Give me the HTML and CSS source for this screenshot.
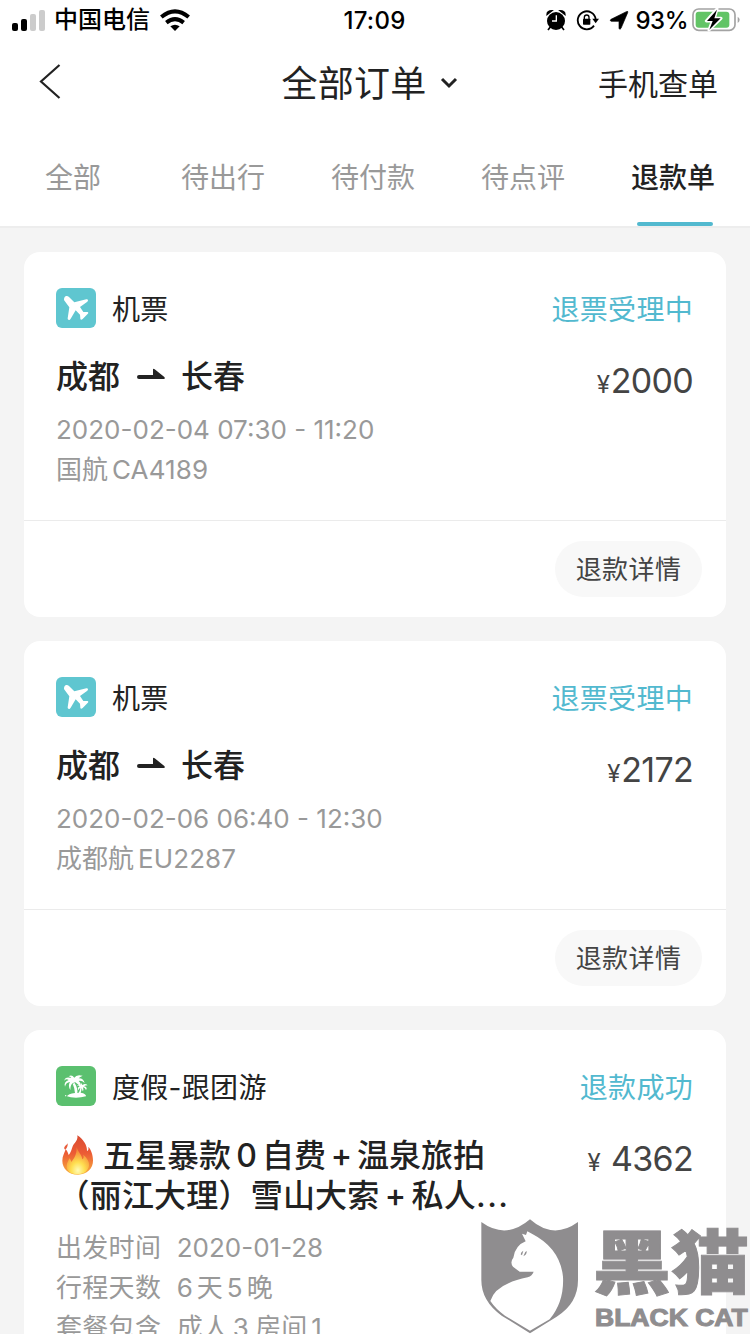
FILE: index.html
```html
<!DOCTYPE html>
<html lang="zh-CN">
<head>
<meta charset="utf-8">
<title>全部订单</title>
<link rel="stylesheet" href="styles.css">
</head>
<body>
<svg class="defs" width="0" height="0">
  <symbol id="plane" viewBox="0 0 120 120">
    <path fill="#fff" d="M25 29C27 23 35 23 39 27L55 43L91 34C96 33 98 38 94 41L72 57L82 72L94 72C98 73 98 76 94 79L80 93C76 97 72 95 73 91L72 80L59 67L44 92C41 98 35 97 35 91L40 58L26 39C23 35 24 32 25 29Z"/>
  </symbol>
  <symbol id="route-arrow" viewBox="0 0 84 34">
    <path fill="#222" d="M6 20H48V4Q48-1 53 3L82 26Q86 32 80 32H6Q0 32 0 26T6 20Z"/>
  </symbol>
</svg>
<div class="screen">
  <header class="status">
    <div class="status-left">
      <svg width="33" height="21" viewBox="0 0 33 21"><rect y="13" width="6" height="8" rx="2"/><rect x="9" y="9" width="6" height="12" rx="2"/><rect x="18" y="4" width="6" height="17" rx="2" fill="#ccc"/><rect x="27" width="6" height="21" rx="2" fill="#ccc"/></svg>
      <span class="carrier">中国电信</span>
      <svg width="30" height="22" viewBox="0 0 90 66"><g fill="none" stroke="#000" stroke-width="12"><path d="M4 24Q45-10 86 24"/><path d="M19 41Q45 20 71 41"/></g><path d="M45 66L31 52Q45 42 59 52Z"/></svg>
    </div>
    <div class="time">17:09</div>
    <div class="status-right">
      <svg width="20" height="22" viewBox="0 0 60 66"><circle cx="30" cy="36" r="27"/><path d="M3 17Q3 5 18 5ZM57 17Q57 5 42 5Z" stroke="#000" stroke-width="4"/><path d="M13 54L6 63M47 54L54 63" stroke="#000" stroke-width="5"/><path d="M31 19V36H18" fill="none" stroke="#fff" stroke-width="4"/></svg>
      <svg class="lock" width="23" height="22" viewBox="0 0 69 66"><path d="M54 50A27 27 0 1 1 59 30" fill="none" stroke="#000" stroke-width="5.500"/><path d="M49 29H69L59 43Z"/><rect x="21" y="29" width="22" height="18" rx="2"/><path d="M25 31V25Q25 18 32 18T39 25V31" fill="none" stroke="#000" stroke-width="4"/></svg>
      <svg class="loc" width="20" height="19" viewBox="0 0 60 57"><path d="M52 2Q58-1 56 5L36 52Q32 58 30 52V31H7Q1 29 6 25Z" stroke="#000" stroke-width="2"/></svg>
      <span class="percent">93%</span>
      <svg width="48" height="24" viewBox="0 0 144 72"><rect x="3" y="3" width="126" height="64" rx="17" fill="#fff" stroke="#a3a3a3" stroke-width="5"/><rect x="11" y="11" width="101" height="48" rx="9" fill="#62c466"/><path d="M137 26Q143 30 143 35T137 45Z" fill="#a3a3a3"/><path d="M75 3L43 39H61L51 66L87 31H67Z" stroke="#fff" stroke-width="9" stroke-linejoin="round"/><path d="M75 5L45 39H62L52 65L86 31H67Z"/></svg>
    </div>
  </header>
  <nav class="nav">
    <svg class="back" width="24" height="38" viewBox="0 0 24 38"><path d="M21.500 3L3 19.500L21.500 36" fill="none" stroke="#222" stroke-width="2.200"/></svg>
    <h1 class="nav-title">全部订单<svg width="18" height="12" viewBox="0 0 18 12"><path d="M2 2L9 9L16 2" fill="none" stroke="#222" stroke-width="3"/></svg></h1>
    <span class="nav-action">手机查单</span>
  </nav>
  <div class="tabs">
    <span class="tab">全部</span><span class="tab">待出行</span><span class="tab">待付款</span><span class="tab">待点评</span><span class="tab active">退款单</span>
  </div>
  <main class="list">
    <article class="card">
      <div class="card-body">
        <div class="card-head"><span class="badge flight"><svg width="40" height="40"><use href="#plane"/></svg></span><span class="kind">机票</span><span class="state">退票受理中</span></div>
        <div class="summary"><h2 class="route">成都<svg width="28" height="12"><use href="#route-arrow"/></svg>长春</h2><div class="price"><span class="yen">¥</span>2000</div></div>
        <p class="line">2020-02-04 07:30 - 11:20</p>
        <p class="line">国航<span class="code">CA4189</span></p>
      </div>
      <div class="card-foot"><span class="button">退款详情</span></div>
    </article>
    <article class="card">
      <div class="card-body">
        <div class="card-head"><span class="badge flight"><svg width="40" height="40"><use href="#plane"/></svg></span><span class="kind">机票</span><span class="state">退票受理中</span></div>
        <div class="summary"><h2 class="route">成都<svg width="28" height="12"><use href="#route-arrow"/></svg>长春</h2><div class="price"><span class="yen">¥</span>2172</div></div>
        <p class="line">2020-02-06 06:40 - 12:30</p>
        <p class="line">成都航<span class="code">EU2287</span></p>
      </div>
      <div class="card-foot"><span class="button">退款详情</span></div>
    </article>
    <article class="card">
      <div class="card-body">
        <div class="card-head"><span class="badge holiday"><svg width="40" height="40" viewBox="0 0 120 120"><g fill="#fff"><path d="M33 91Q36 84 57 81Q56 66 50 53L56 51Q66 68 64 81L68 80Q72 74 73 65L77 66Q76 75 74 80Q91 83 90 91Q75 95 60 95Q42 95 33 91Z"/><path d="M53 50Q43 52 43 72Q35 59 42 48Q30 49 27 62Q22 49 38 42Q31 37 25 44Q27 31 46 36Q43 31 38 31Q47 24 55 35Q61 24 80 29Q72 32 68 37Q82 36 86 51Q77 43 68 45Q78 54 73 67Q68 54 58 49Z"/><path d="M75 65Q69 65 67 73Q62 64 72 61Q67 57 63 60Q67 53 75 58Q73 54 76 51Q77 56 80 57Q87 51 95 58Q87 58 84 61Q96 64 90 72Q87 65 81 64Q84 72 80 76Q79 68 75 65Z"/><circle cx="29" cy="89" r="2"/></g></svg></span><span class="kind">度假-跟团游</span><span class="state">退款成功</span></div>
        <div class="summary">
          <h2 class="tour"><span class="tour-line"><svg class="fire" width="32" height="40" viewBox="0 0 96 120"><defs><linearGradient id="flame" x2="0" y2="1"><stop stop-color="#d94b32"/><stop offset=".45" stop-color="#ec5b35"/><stop offset="1" stop-color="#f7ae3c"/></linearGradient><radialGradient id="glow" cx=".5" cy=".85" r=".75"><stop stop-color="#fffbb6"/><stop offset=".4" stop-color="#ffdf50"/><stop offset="1" stop-color="#f58338"/></radialGradient></defs><path fill="url(#flame)" d="M46 1C64 13 76 31 75 48C80 47 80 40 79 35C88 44 93 62 93 76C94 101 74 119 48 119C20 119 1 101 1 77C1 63 8 53 11 43C16 48 18 55 20 60C31 47 29 35 36 27C44 18 48 11 46 1Z"/><path fill="#e85c3b" d="M17 25Q18 37 10 44Q3 39 10 32Q15 29 17 25Z"/><path fill="url(#glow)" d="M44 37C48 51 60 60 61 73C65 71 66 65 64 59C76 70 85 83 80 97C74 112 62 118 47 118C29 118 13 109 14 92C15 82 20 76 22 70C25 73 27 78 28 81C41 65 44 54 44 37Z"/></svg>五星暴款<span class="cell">0</span>自费<span class="cell">+</span>温泉旅拍</span><span class="tour-line second">（丽江大理）雪山大索<span class="cell">+</span>私人<span class="dots">...</span></span></h2>
          <div class="price"><span class="yen wide">¥</span>4362</div>
        </div>
        <p class="line"><span class="label">出发时间</span>2020-01-28</p>
        <p class="line"><span class="label">行程天数</span><span class="num first">6</span>天<span class="num">5</span>晚</p>
        <p class="line"><span class="label">套餐包含</span>成人<span class="num">3</span>&#8202;房间<span class="num">1</span></p>
      </div>
    </article>
  </main>
  <svg class="watermark" width="280" height="134" viewBox="0 0 840 402">
    <path fill="#8f8d8f" d="M34 66Q108 120 180 58Q250 120 324 66V240Q324 310 260 350L180 400L95 347Q34 303 34 240Z"/>
    <path fill="#fff" d="M167 124L156 101L168 105L172 94L187 102Q270 145 279 230Q283 305 239 358L180 392L105 347Q78 328 61 303Q76 252 173 232Q187 227 191 215H149L129 200Q119 187 130 173Q136 136 167 124Z"/>
    <path fill="#8f8d8f" d="M152 163Q153 155 160 152L156 166ZM170 153Q171 164 160 169L166 156Z"/>
    <g fill="#8f8d8f" stroke="#8f8d8f"><text class="wm-cn" transform="translate(368 266) scale(1 .9)" textLength="470" lengthAdjust="spacingAndGlyphs">黑猫</text>
    <text class="wm-en" x="375" y="379" textLength="458" lengthAdjust="spacingAndGlyphs">BLACK CAT</text></g>
  </svg>
</div>
</body>
</html>
```
FILE: styles.css
```css
* { box-sizing: border-box; }
body, h1, h2, p { margin: 0; }
body {
  width: 750px;
  height: 1334px;
  overflow: hidden;
  background: #f4f4f4;
  color: #222;
  font-family: Inter, "Noto Sans CJK SC", sans-serif;
}
svg { flex: none; display: block; }
.defs { position: absolute; }
.screen { position: relative; height: 1334px; overflow: hidden; }

.status {
  display: grid;
  grid-template-columns: 1fr auto 1fr;
  align-items: center;
  height: 40px;
  padding: 0 10px 0 12px;
  background: #fff;
  color: #000;
  font-size: 24px;
  font-weight: 500;
}
.status-left, .status-right { display: flex; align-items: center; }
.status-right { justify-content: flex-end; }
.carrier { margin: 0 10px 0 9px; line-height: 36px; }
.time { padding-right: 3px; letter-spacing: .3px; }
.lock { margin-left: 10px; }
.loc { margin: 0 7px 0 10px; }
.percent { margin-right: 4px; letter-spacing: -.5px; }

.nav {
  display: grid;
  grid-template-columns: 200px 1fr 200px;
  align-items: center;
  height: 88px;
  padding: 0 32px 0 38px;
  background: #fff;
}
.back { margin-top: -6px; }
.nav-title {
  display: flex;
  align-items: center;
  justify-content: center;
  gap: 14px;
  padding-right: 16px;
  font-size: 36px;
  font-weight: 400;
  line-height: 52px;
  letter-spacing: .2px;
}
.nav-title svg { margin-top: -2px; }
.nav-action { padding-bottom: 4px; font-size: 30px; text-align: right; }

.tabs {
  display: grid;
  grid-template-columns: repeat(5, 150px);
  height: 100px;
  margin-bottom: 24px;
  background: #fff;
  border-bottom: 2px solid #ededed;
}
.tab {
  display: flex;
  flex-direction: column;
  align-items: center;
  justify-content: space-between;
  padding: 3px 4px 0 0;
  color: #999;
  font-size: 28px;
  line-height: 95px;
}
.active { color: #222; font-weight: 500; }
.active::after {
  content: "";
  width: 76px;
  height: 4px;
  margin: -4px 0 0 4px;
  border-radius: 2px;
  background: #52b9cf;
}

.list { display: flex; flex-direction: column; gap: 24px; padding: 0 24px; }
.card { border-radius: 16px; background: #fff; }
.card-body { padding: 36px 32px 31px; }
.card-head { display: flex; align-items: center; height: 40px; margin-bottom: 29px; font-size: 28px; letter-spacing: .3px; }
.badge { width: 40px; height: 40px; margin-right: 16px; border-radius: 6px; }
.flight { background: #5fc6d0; }
.holiday { background: #5bc06f; }
.state { margin: 0 1px 0 auto; color: #52b9cf; }
.summary { display: flex; justify-content: space-between; height: 40px; margin-bottom: 12px; }
.summary:has(.tour) { height: 80px; }
.route, .tour { font-size: 32px; font-weight: 500; line-height: 42px; }
.route { display: flex; align-items: center; gap: 16.500px; }
.route svg { margin-top: -7px; }
.tour { white-space: nowrap; }
.tour-line { display: block; height: 40px; }
.second { padding-left: 1.500px; letter-spacing: .2px; }
.fire { display: inline-block; margin: 0 9px 0 6px; vertical-align: top; }
.cell { display: inline-block; width: 31px; text-align: center; }
.second .cell { width: 32px; }
.dots { letter-spacing: 1.500px; }
.price { height: 40px; padding-right: 1px; color: #444; font-size: 34px; line-height: 47px; letter-spacing: -.7px; white-space: nowrap; }
.yen { margin-right: 1.500px; font-size: 24px; }
.wide { margin-right: 11px; }
.line { height: 40px; color: #999; font-size: 26px; line-height: 41px; white-space: nowrap; }
.code { margin-left: 4px; letter-spacing: .1px; }
.label { margin-right: 15.500px; letter-spacing: .3px; }
.num { margin: 0 4px; }
.first { margin-left: 0; }
.card-foot { display: flex; justify-content: flex-end; padding: 20px 24px; border-top: 1px solid #ebebeb; }
.button {
  width: 147px;
  height: 56px;
  border-radius: 28px;
  background: #f8f8f8;
  color: #444;
  font-size: 26px;
  letter-spacing: .4px;
  line-height: 58px;
  text-align: center;
}

.watermark { position: absolute; left: 470px; top: 1200px; }
.wm-cn { font: 900 234px "Noto Sans CJK SC", sans-serif; stroke-width: 3px; }
.wm-en { font: 700 70px "Liberation Sans", sans-serif; stroke-width: 3px; }
```
